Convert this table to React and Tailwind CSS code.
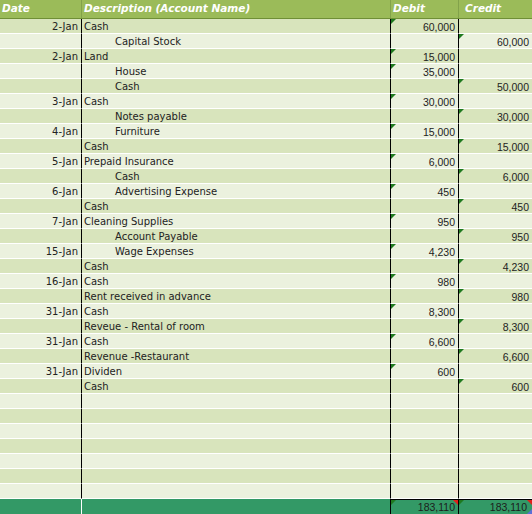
import React from "react";

const entries = [
  ["2-Jan", "Cash", false, "60,000", ""],
  ["", "Capital Stock", true, "", "60,000"],
  ["2-Jan", "Land", false, "15,000", ""],
  ["", "House", true, "35,000", ""],
  ["", "Cash", true, "", "50,000"],
  ["3-Jan", "Cash", false, "30,000", ""],
  ["", "Notes payable", true, "", "30,000"],
  ["4-Jan", "Furniture", true, "15,000", ""],
  ["", "Cash", false, "", "15,000"],
  ["5-Jan", "Prepaid Insurance", false, "6,000", ""],
  ["", "Cash", true, "", "6,000"],
  ["6-Jan", "Advertising Expense", true, "450", ""],
  ["", "Cash", false, "", "450"],
  ["7-Jan", "Cleaning Supplies", false, "950", ""],
  ["", "Account Payable", true, "", "950"],
  ["15-Jan", "Wage Expenses", true, "4,230", ""],
  ["", "Cash", false, "", "4,230"],
  ["16-Jan", "Cash", false, "980", ""],
  ["", "Rent received in advance", false, "", "980"],
  ["31-Jan", "Cash", false, "8,300", ""],
  ["", "Reveue - Rental of room", false, "", "8,300"],
  ["31-Jan", "Cash", false, "6,600", ""],
  ["", "Revenue -Restaurant", false, "", "6,600"],
  ["31-Jan", "Dividen", false, "600", ""],
  ["", "Cash", false, "", "600"],
  ["", "", false, "", ""],
  ["", "", false, "", ""],
  ["", "", false, "", ""],
  ["", "", false, "", ""],
  ["", "", false, "", ""],
  ["", "", false, "", ""],
  ["", "", false, "", ""],
];

function Flag({ color = "#1f7a1f", corner = "tl" }) {
  const pos = {
    tl: "left-0 top-0",
    tr: "right-0 top-0",
    br: "right-0 bottom-0",
  }[corner];
  const pts = {
    tl: "0,0 5,0 0,5",
    tr: "0,0 5,0 5,5",
    br: "5,0 5,5 0,5",
  }[corner];
  return (
    <svg className={`absolute ${pos}`} width="5" height="5" viewBox="0 0 5 5">
      <polygon points={pts} fill={color} />
    </svg>
  );
}

// numbers use an Arial-width face, closer to the narrow digits in the sheet
const numFont = { fontFamily: '"Liberation Sans", sans-serif' };

function NumCell({ value, width, bg }) {
  return (
    <div
      className={`relative ${width} ${bg} border-l border-black border-b border-b-white text-right pr-[3px] pt-[2px] leading-[13px] text-[10.5px]`}
      style={numFont}
    >
      {value && <Flag />}
      {value}
    </div>
  );
}

export default function App() {
  return (
    <div className="w-[532px] h-[514px] overflow-hidden bg-white text-[#222] text-[10px]" style={{ fontFamily: '"DejaVu Sans", sans-serif' }}>
      <div className="flex h-[19px] bg-[#9bbb59] border-b border-[#6f8f36] text-white italic font-bold text-[10.5px] leading-[16px]">
        <div className="w-[82px] pl-[2px] border-r border-[#82a24a]">Date</div>
        <div className="w-[308px] pl-[2px]">Description (Account Name)</div>
        <div className="w-[68px] pl-[2px] border-l border-[#82a24a]">Debit</div>
        <div className="w-[74px] pl-[6px] border-l border-[#82a24a]">Credit</div>
      </div>
      {entries.map((r, i) => {
        const bg = i % 2 === 0 ? "bg-[#d8e4bc]" : "bg-[#ebf1de]";
        return (
          <div key={i} className="flex h-[15px]">
            <div className={`w-[82px] ${bg} border-r border-black border-b border-b-white text-right pr-[3px] pt-[2px] leading-[12px]`}>{r[0]}</div>
            <div className={`w-[308px] ${bg} border-b border-white pt-[2px] leading-[12px] ${r[2] ? "pl-[33px]" : "pl-[2px]"}`}>{r[1]}</div>
            <NumCell value={r[3]} width="w-[68px]" bg={bg} />
            <NumCell value={r[4]} width="w-[74px]" bg={bg} />
          </div>
        );
      })}
      <div className="flex h-[15px] bg-[#339966] text-[#1c1c1c]" style={numFont}>
        <div className="w-[82px] border-r border-white" />
        <div className="w-[308px]" />
        <div className="relative w-[68px] border-l border-t border-black text-right pr-[3px] text-[10.5px] leading-[14px]">
          <Flag />
          <Flag color="#e0201a" corner="tr" />
          183,110
        </div>
        <div className="relative w-[74px] border-l border-t border-black text-right pr-[5px] text-[10.5px] leading-[14px]">
          <Flag />
          <Flag color="#e0201a" corner="tr" />
          <Flag color="#5b6fd6" corner="br" />
          183,110
        </div>
      </div>
    </div>
  );
}
